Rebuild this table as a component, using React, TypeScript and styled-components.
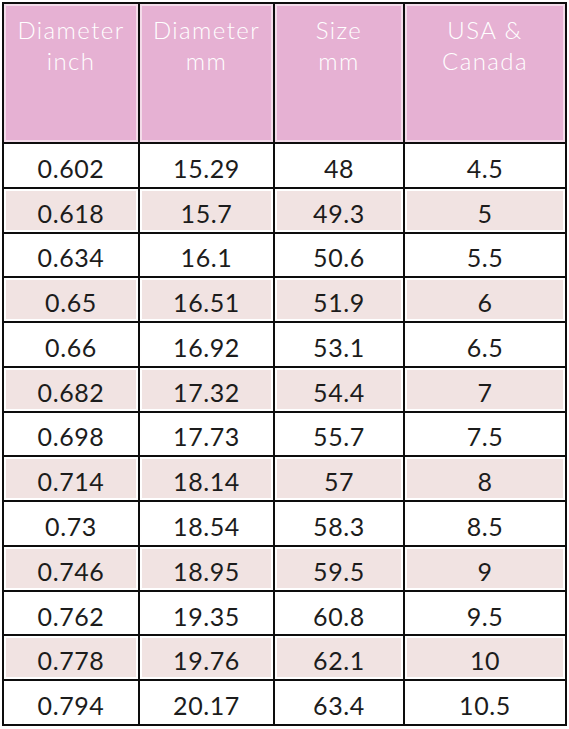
import React from "react";
import styled, { createGlobalStyle } from "styled-components";

const GlobalStyle = createGlobalStyle`
  html, body { margin: 0; padding: 0; background: #ffffff; }
  body { font-family: Lato, "Open Sans", sans-serif; }
`;

const Page = styled.div`
  padding: 2px 0 0 2px;
  background: #ffffff;
  width: 569px;
  height: 729px;
  box-sizing: border-box;
`;

const Grid = styled.div`
  display: grid;
  grid-template-columns: 134px 133px 128px 160px;
  grid-template-rows: 138px repeat(13, 1fr);
  gap: 2px;
  padding: 2px;
  width: 565px;
  height: 724px;
  box-sizing: border-box;
  background: #0d0d0d;
`;

const HeadCell = styled.div`
  background: #e6b1d3;
  box-shadow: inset 0 0 0 2px #f3dbe9;
  color: #ffffff;
  font-weight: 300;
  font-size: 24px;
  line-height: 31px;
  text-align: center;
  padding-top: 10px;
  letter-spacing: 1.4px;
`;

const Cell = styled.div<{ $shaded: boolean }>`
  background: ${(p) => (p.$shaded ? "#f1e3e2" : "#ffffff")};
  box-shadow: inset 0 0 0 2px #ffffff;
  color: #1c1c1c;
  font-size: 25px;
  font-weight: 400;
  letter-spacing: 0.6px;
  display: flex;
  align-items: center;
  justify-content: center;
  padding-top: 5px;
  box-sizing: border-box;
`;

const headers = [
  ["Diameter", "inch"],
  ["Diameter", "mm"],
  ["Size", "mm"],
  ["USA &", "Canada"],
];

const rows: string[][] = [
  ["0.602", "15.29", "48", "4.5"],
  ["0.618", "15.7", "49.3", "5"],
  ["0.634", "16.1", "50.6", "5.5"],
  ["0.65", "16.51", "51.9", "6"],
  ["0.66", "16.92", "53.1", "6.5"],
  ["0.682", "17.32", "54.4", "7"],
  ["0.698", "17.73", "55.7", "7.5"],
  ["0.714", "18.14", "57", "8"],
  ["0.73", "18.54", "58.3", "8.5"],
  ["0.746", "18.95", "59.5", "9"],
  ["0.762", "19.35", "60.8", "9.5"],
  ["0.778", "19.76", "62.1", "10"],
  ["0.794", "20.17", "63.4", "10.5"],
];

export default function App() {
  return (
    <>
      <GlobalStyle />
      <Page>
        <Grid>
          {headers.map((h, i) => (
            <HeadCell key={`h${i}`}>
              {h[0]}
              <br />
              {h[1]}
            </HeadCell>
          ))}
          {rows.map((r, ri) =>
            r.map((v, ci) => (
              <Cell key={`${ri}-${ci}`} $shaded={ri % 2 === 1}>
                {v}
              </Cell>
            ))
          )}
        </Grid>
      </Page>
    </>
  );
}
